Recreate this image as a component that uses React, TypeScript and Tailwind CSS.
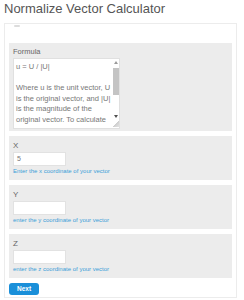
const FORMULA_LINES = [
  "u = U / |U|",
  "",
  "Where u is the unit vector, U",
  "is the original vector, and |U|",
  "is the magnitude of the",
  "original vector. To calculate",
];

const FIELDS = [
  { label: "X", value: "5", hint: "Enter the x coordinate of your vector" },
  { label: "Y", value: "", hint: "enter the y coordinate of your vector" },
  { label: "Z", value: "", hint: "enter the z coordinate of your vector" },
];

function FakeScrollbar() {
  return (
    <div className="flex w-[7px] flex-col items-center bg-white">
      <div className="mt-[2px] h-0 w-0 border-x-[2px] border-b-[3px] border-x-transparent border-b-[#9a9a9a]" />
      <div className="mt-[4px] h-[27px] w-[6px] bg-[#c4c4c4]" />
      <div className="flex-1" />
      <div className="h-0 w-0 border-x-[2px] border-t-[3px] border-x-transparent border-t-[#505050]" />
      <div className="mt-[3px] mb-[1px] h-[6px] w-[6px] bg-[linear-gradient(135deg,#fff_45%,#cfcfcf_50%,#e4e4e4)]" />
    </div>
  );
}

export default function App() {
  return (
    <div className="h-[300px] w-[244px] overflow-hidden bg-white font-['Liberation_Sans',Arial,sans-serif]">
      <h1 className="pl-[4px] pt-[1px] text-[13px] leading-[16px] text-[#555]">
        Normalize Vector Calculator
      </h1>

      <div className="mt-[6px] ml-[4px] h-[275px] w-[233px] border border-[#ececec] px-[4px]">
        <div className="mt-[1px] ml-[5px] h-[2px] w-[6px] rounded-full bg-[#dcdcdc]" />

        <div className="mt-[16px] h-[88px] bg-[#ececec] px-[4px] pt-[4px]">
          <p className="text-[7.5px] leading-[10px] text-[#666]">Formula</p>
          <div className="mt-[1px] flex h-[71px] w-[107px] border border-[#e0e0e0] bg-white">
            <div className="flex-1 overflow-hidden pl-[2px] pt-[3px] text-[7.5px] leading-[10.6px] text-[#777]">
              {FORMULA_LINES.map((line, i) => (
                <div key={i} className="h-[10.6px] whitespace-nowrap">
                  {line}
                </div>
              ))}
            </div>
            <FakeScrollbar />
          </div>
        </div>

        <div className="mt-[5px] flex flex-col gap-[5px]">
          {FIELDS.map((f) => (
            <div key={f.label} className="h-[44px] bg-[#ececec] px-[4px] pt-[5px]">
              <p className="text-[8px] leading-[10px] text-[#666]">{f.label}</p>
              <div className="mt-[1px] h-[14px] w-[53px] border border-[#e2e2e2] bg-white pl-[3px] text-[7px] leading-[12px] text-[#777]">
                {f.value}
              </div>
              <p className="mt-[1px] text-[6px] leading-[9px] text-[#3aa0d8]">{f.hint}</p>
            </div>
          ))}
        </div>

        <button
          type="button"
          className="mt-[5px] block h-[12px] w-[30px] rounded-[3px] bg-[#1a8fd9] text-[6.5px] font-bold leading-[12px] text-white"
        >
          Next
        </button>
      </div>
    </div>
  );
}
